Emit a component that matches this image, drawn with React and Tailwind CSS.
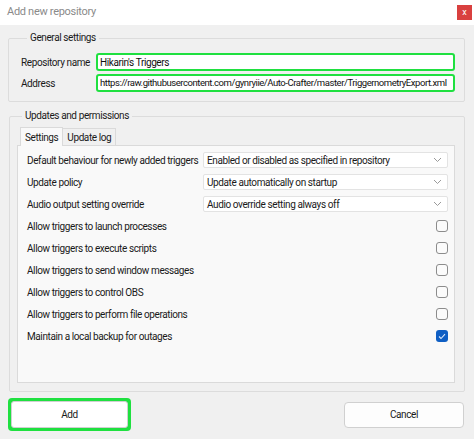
import { useState } from "react"

const permissions = [
  { label: "Allow triggers to launch processes", checked: false },
  { label: "Allow triggers to execute scripts", checked: false },
  { label: "Allow triggers to send window messages", checked: false },
  { label: "Allow triggers to control OBS", checked: false },
  { label: "Allow triggers to perform file operations", checked: false },
  { label: "Maintain a local backup for outages", checked: true },
]

const selects = [
  { label: "Default behaviour for newly added triggers", value: "Enabled or disabled as specified in repository" },
  { label: "Update policy", value: "Update automatically on startup" },
  { label: "Audio output setting override", value: "Audio override setting always off" },
]

const Chevron = () => (
  <svg width="9" height="6" viewBox="0 0 9 6" className="text-[#9a9a9a]">
    <path d="M1 1l3.5 3.5L8 1" fill="none" stroke="currentColor" strokeWidth="1" />
  </svg>
)

const Checkbox = ({ checked }) =>
  checked ? (
    <div className="w-[12px] h-[12px] rounded-[3px] bg-[#0f5fc4] flex items-center justify-center">
      <svg width="8" height="7" viewBox="0 0 8 7">
        <path d="M1 3.5l2 2L7 1.2" fill="none" stroke="#dbe8fb" strokeWidth="1.1" />
      </svg>
    </div>
  ) : (
    <div className="w-[12px] h-[12px] rounded-[3px] border border-[#8c8c8c] bg-[#fbfbfb]"></div>
  )

const GreenField = ({ value, className = "" }) => (
  <div className="h-[18px] rounded-[3px] bg-[#1fe040] p-[2px]">
    <div className={`h-full bg-white rounded-[1px] px-[2px] flex items-center text-[#111] overflow-hidden whitespace-nowrap ${className}`}>
      {value}
    </div>
  </div>
)

export default function App() {
  const [tab, setTab] = useState("settings")

  return (
    <div className="w-[474px] h-[439px] bg-[#f0f0f0] flex flex-col text-[10px] tracking-[-0.4px] text-[#1a1a1a] font-['Roboto',sans-serif] overflow-hidden">
      {/* title bar */}
      <div className="h-[25px] bg-white flex items-center justify-between pl-[7px] pr-[2px] shrink-0">
        <span className="text-[11px] tracking-[-0.3px] text-[#8a8a8a]">Add new repository</span>
        <div className="w-[15px] h-[15px] bg-[#d9403f] text-white text-[9px] tracking-normal leading-none flex items-center justify-center">x</div>
      </div>

      <div className="flex-1 flex flex-col px-[8px] pt-[6px]">
        {/* general settings */}
        <fieldset className="border border-[#dcdcdc] rounded-[2px] pl-[12px] pr-[9px] pb-[9px] mr-[1px] min-w-0">
          <legend className="ml-[6px] px-[3px] leading-[14px]">General settings</legend>
          <div className="flex flex-col gap-[3px] mt-[8px]">
            <div className="flex items-center">
              <span className="w-[75px] shrink-0">Repository name</span>
              <div className="flex-1 min-w-0"><GreenField value="Hikarin's Triggers" /></div>
            </div>
            <div className="flex items-center">
              <span className="w-[75px] shrink-0">Address</span>
              <div className="flex-1 min-w-0">
                <GreenField
                  className="text-[9.5px] tracking-[-0.45px]"
                  value="https://raw.githubusercontent.com/gynryiie/Auto-Crafter/master/TriggernometryExport.xml"
                />
              </div>
            </div>
          </div>
        </fieldset>

        {/* updates and permissions */}
        <fieldset className="border border-[#dcdcdc] rounded-[2px] mt-[7px] ml-[1px] mr-[1px] pl-[7px] pr-[9px] pb-[8px] min-w-0">
          <legend className="ml-[5px] px-[3px] leading-[14px]">Updates and permissions</legend>
          <div className="flex items-end mt-[4px] pl-[3px]">
            <button
              onClick={() => setTab("settings")}
              className={`px-[4px] border border-b-0 border-[#dadada] ${tab === "settings" ? "bg-[#f9f9f9] -mb-[1px] h-[19px] relative z-10" : "h-[17px] bg-[#f0f0f0]"}`}
            >
              Settings
            </button>
            <button
              onClick={() => setTab("log")}
              className={`px-[4px] border border-b-0 border-l-0 border-[#dadada] ${tab === "log" ? "bg-[#f9f9f9] -mb-[1px] h-[19px] relative z-10" : "h-[17px] bg-[#f0f0f0]"}`}
            >
              Update log
            </button>
          </div>
          <div className="h-[238px] border border-[#dadada] bg-[#f9f9f9] pl-[9px] pr-[6px] pt-[6px]">
            {tab === "settings" && (
              <div className="flex flex-col gap-[6px]">
                {selects.map((s) => (
                  <div key={s.label} className="flex items-center h-[16px]">
                    <span className="w-[176px] shrink-0 whitespace-nowrap">{s.label}</span>
                    <div className="flex-1 h-[16px] bg-white border border-[#e3e3e3] rounded-[2px] flex items-center justify-between pl-[3px] pr-[5px]">
                      <span>{s.value}</span>
                      <Chevron />
                    </div>
                  </div>
                ))}
                {permissions.map((p) => (
                  <div key={p.label} className="flex items-center justify-between h-[16px]">
                    <span>{p.label}</span>
                    <Checkbox checked={p.checked} />
                  </div>
                ))}
              </div>
            )}
          </div>
        </fieldset>

        {/* buttons */}
        <div className="flex items-center justify-between mt-[6px] pr-[2px]">
          <div className="w-[123px] h-[33px] rounded-[4px] bg-[#1fe040] p-[3px]">
            <button className="w-full h-full bg-white rounded-[3px] border border-[#d0d0d0]">Add</button>
          </div>
          <button className="w-[120px] h-[26px] bg-[#fdfdfd] rounded-[4px] border border-[#d0d0d0]">Cancel</button>
        </div>
      </div>
    </div>
  )
}
